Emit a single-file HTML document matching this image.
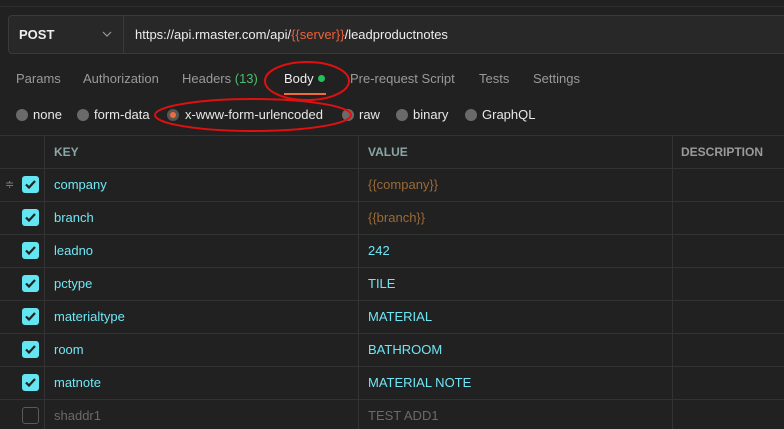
<!DOCTYPE html><html><head><style>
body{margin:0;width:784px;height:429px;background:#212121;font-family:"Liberation Sans",sans-serif;overflow:hidden;position:relative;color:#ddd}
.a{position:absolute;white-space:nowrap}
.hl{position:absolute;left:0;width:784px;height:1px;background:#333}
.vl{position:absolute;top:136px;width:1px;height:293px;background:#333}
.cb{position:absolute;left:22px;width:17px;height:17px;border-radius:3px;background:#63e6f2;box-sizing:border-box}
.cb svg{position:absolute;left:2px;top:3px}
.k{position:absolute;left:54px;font-size:13px;color:#70e6f4}
.v{position:absolute;left:368px;font-size:13px;color:#70e6f4}
.r{position:absolute;width:12px;height:12px;border-radius:50%;background:#6a6a6a;top:109px}
.rt{position:absolute;top:107px;font-size:13px;color:#e8e8e8}
.t{position:absolute;top:71px;font-size:13px;color:#9a9a9a}
</style></head><body>
<div class="hl" style="top:6px;background:#2e2e2e"></div>
<div class="a" style="left:8px;top:15px;width:790px;height:39px;background:#282828;border:1px solid #3a3a3a;border-radius:4px;box-sizing:border-box"></div>
<div class="a" style="left:123px;top:16px;width:1px;height:37px;background:#3a3a3a"></div>
<div class="a" style="left:19px;top:27px;font-size:13px;font-weight:bold;color:#eee">POST</div>
<svg class="a" style="left:102px;top:31px" width="10" height="6"><path d="M1 1L5 5L9 1" stroke="#999" fill="none" stroke-width="1.2"/></svg>
<div class="a" style="left:135px;top:27px;font-size:13px;color:#eee">https://api.rmaster.com/api/<span style="color:#f0603a">{{server}}</span>/leadproductnotes</div>
<div class="t" style="left:16px">Params</div>
<div class="t" style="left:83px">Authorization</div>
<div class="t" style="left:182px">Headers <span style="color:#4cbf6b">(13)</span></div>
<div class="t" style="left:284px;color:#eee">Body</div>
<div class="a" style="left:318px;top:75px;width:7px;height:7px;border-radius:50%;background:#1fc35a"></div>
<div class="a" style="left:284px;top:93px;width:42px;height:2px;background:#f26b3a"></div>
<div class="t" style="left:350px">Pre-request Script</div>
<div class="t" style="left:479px">Tests</div>
<div class="t" style="left:533px">Settings</div>
<div class="r" style="left:16px"></div><div class="rt" style="left:33px">none</div>
<div class="r" style="left:77px"></div><div class="rt" style="left:94px">form-data</div>
<div class="r" style="left:167px;background:#555"><div style="margin:3px;width:6px;height:6px;border-radius:50%;background:#f26b3a"></div></div><div class="rt" style="left:185px">x-www-form-urlencoded</div>
<div class="r" style="left:342px"></div><div class="rt" style="left:359px">raw</div>
<div class="r" style="left:396px"></div><div class="rt" style="left:413px">binary</div>
<div class="r" style="left:465px"></div><div class="rt" style="left:482px">GraphQL</div>
<svg class="a" style="left:0;top:0" width="784" height="140"><ellipse cx="307" cy="81" rx="42" ry="19" fill="none" stroke="#e01010" stroke-width="2"/><ellipse cx="253" cy="115" rx="98" ry="16" fill="none" stroke="#e01010" stroke-width="2"/></svg>
<div class="hl" style="top:135px"></div>
<div class="vl" style="left:44px"></div><div class="vl" style="left:358px"></div><div class="vl" style="left:672px"></div>
<div class="a" style="left:54px;top:145px;font-size:12px;font-weight:bold;color:#8aa6a6">KEY</div>
<div class="a" style="left:368px;top:145px;font-size:12px;font-weight:bold;color:#8aa6a6">VALUE</div>
<div class="a" style="left:681px;top:145px;font-size:12px;font-weight:bold;color:#9a9a9a">DESCRIPTION</div>
<div class="hl" style="top:168px"></div><div class="hl" style="top:201px"></div><div class="hl" style="top:234px"></div><div class="hl" style="top:267px"></div><div class="hl" style="top:300px"></div><div class="hl" style="top:333px"></div><div class="hl" style="top:366px"></div><div class="hl" style="top:399px"></div>
<div class="a" style="left:5px;top:178px;font-size:11px;color:#777">≑</div>
<div class="cb" style="top:176px"><svg width="13" height="11"><path d="M2 5.5L5 8.5L11 2" stroke="#222" stroke-width="2.2" fill="none"/></svg></div>
<div class="cb" style="top:209px"><svg width="13" height="11"><path d="M2 5.5L5 8.5L11 2" stroke="#222" stroke-width="2.2" fill="none"/></svg></div>
<div class="cb" style="top:242px"><svg width="13" height="11"><path d="M2 5.5L5 8.5L11 2" stroke="#222" stroke-width="2.2" fill="none"/></svg></div>
<div class="cb" style="top:275px"><svg width="13" height="11"><path d="M2 5.5L5 8.5L11 2" stroke="#222" stroke-width="2.2" fill="none"/></svg></div>
<div class="cb" style="top:308px"><svg width="13" height="11"><path d="M2 5.5L5 8.5L11 2" stroke="#222" stroke-width="2.2" fill="none"/></svg></div>
<div class="cb" style="top:341px"><svg width="13" height="11"><path d="M2 5.5L5 8.5L11 2" stroke="#222" stroke-width="2.2" fill="none"/></svg></div>
<div class="cb" style="top:374px"><svg width="13" height="11"><path d="M2 5.5L5 8.5L11 2" stroke="#222" stroke-width="2.2" fill="none"/></svg></div>
<div class="cb" style="top:407px;background:none;border:1.5px solid #5a5a5a"></div>
<div class="k" style="top:177px">company</div><div class="v" style="top:177px;color:#9a6a38">{{company}}</div>
<div class="k" style="top:210px">branch</div><div class="v" style="top:210px;color:#9a6a38">{{branch}}</div>
<div class="k" style="top:243px">leadno</div><div class="v" style="top:243px">242</div>
<div class="k" style="top:276px">pctype</div><div class="v" style="top:276px">TILE</div>
<div class="k" style="top:309px">materialtype</div><div class="v" style="top:309px">MATERIAL</div>
<div class="k" style="top:342px">room</div><div class="v" style="top:342px">BATHROOM</div>
<div class="k" style="top:375px">matnote</div><div class="v" style="top:375px">MATERIAL NOTE</div>
<div class="k" style="top:408px;color:#6a6a6a">shaddr1</div><div class="v" style="top:408px;color:#6a6a6a">TEST ADD1</div>
</body></html>
